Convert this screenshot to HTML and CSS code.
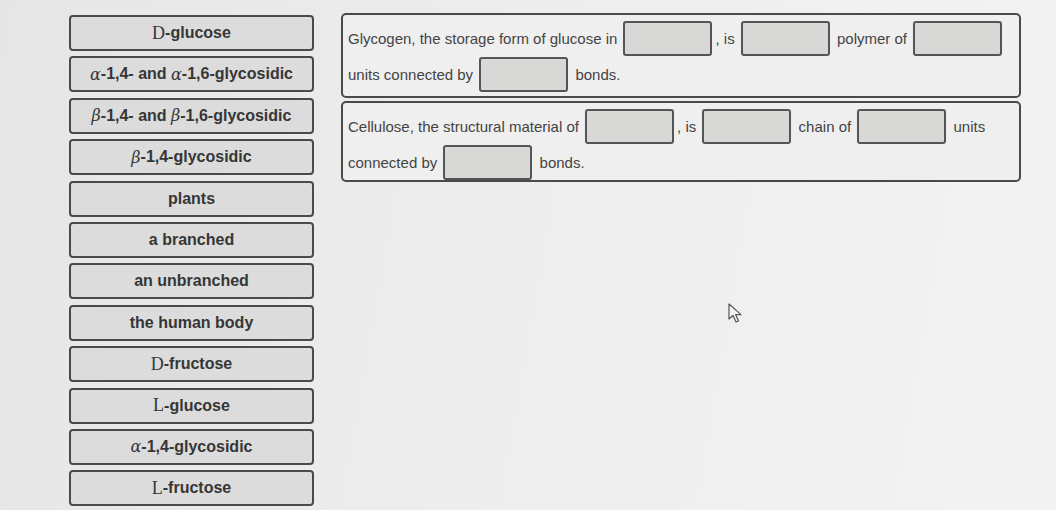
FILE: index.html
```html
<!DOCTYPE html>
<html lang="en">
<head>
<meta charset="UTF-8" />
<meta name="viewport" content="width=device-width, initial-scale=1.0"/>
<title>Glycogen and Cellulose</title>
<link rel="stylesheet" href="styles.css">
</head>
<body>
    <div class="workspace">
        <!-- Answer bank -->
        <div class="bank">
            <div class="tile"><span class="rm">D</span>-glucose</div>
            <div class="tile"><span class="gr">α</span>-1,4- and <span class="gr">α</span>-1,6-glycosidic</div>
            <div class="tile"><span class="gr">β</span>-1,4- and <span class="gr">β</span>-1,6-glycosidic</div>
            <div class="tile"><span class="gr">β</span>-1,4-glycosidic</div>
            <div class="tile">plants</div>
            <div class="tile">a branched</div>
            <div class="tile">an unbranched</div>
            <div class="tile">the human body</div>
            <div class="tile"><span class="rm">D</span>-fructose</div>
            <div class="tile"><span class="rm">L</span>-glucose</div>
            <div class="tile"><span class="gr">α</span>-1,4-glycosidic</div>
            <div class="tile"><span class="rm">L</span>-fructose</div>
        </div>

        <!-- Sentences -->
        <div class="sentences">
            <div class="panel">
                <div class="line">Glycogen, the storage form of glucose in <span class="drop"></span>, is <span class="drop"></span> polymer of <span class="drop"></span></div>
                <div class="line">units connected by <span class="drop"></span> bonds.</div>
            </div>
            <div class="panel">
                <div class="line">Cellulose, the structural material of <span class="drop"></span>, is <span class="drop"></span> chain of <span class="drop"></span> units</div>
                <div class="line">connected by <span class="drop"></span> bonds.</div>
            </div>
        </div>
    </div>

    <svg class="cursor" width="16" height="22" viewBox="0 0 16 22">
        <path d="M1 1 L1 16 L5 12.5 L8 19 L10.5 18 L7.6 11.6 L13 11.6 Z" fill="#f4f4f4" stroke="#555" stroke-width="1.2" stroke-linejoin="round"/>
    </svg>
</body>
</html>
```

FILE: styles.css
```css
html, body {
    margin: 0;
    padding: 0;
    height: 100%;
    overflow: hidden;
}

body {
    font-family: "Liberation Sans", Arial, sans-serif;
    background: linear-gradient(100deg, #e6e6e6 0%, #ededed 45%, #f3f3f3 100%);
    color: #3a3a3a;
    position: relative;
}

.workspace {
    display: flex;
    gap: 27px;
    padding: 15px 0 0 69px;
}

.bank {
    display: flex;
    flex-direction: column;
    gap: 5.4px;
    width: 245px;
}

.tile {
    height: 32px;
    display: flex;
    justify-content: center;
    align-items: center;
    background: #dcdcdc;
    border: 2px solid #4a4a4a;
    border-radius: 4px;
    font-size: 16px;
    font-weight: bold;
    color: #363636;
    white-space: pre;
}

.rm {
    font-family: "Liberation Serif", "Times New Roman", serif;
    font-weight: normal;
    font-size: 18px;
}

.gr {
    font-family: "DejaVu Serif", "Liberation Serif", serif;
    font-style: italic;
    font-weight: normal;
    font-size: 16px;
}

.sentences {
    display: flex;
    flex-direction: column;
    gap: 3px;
    margin-top: -2px;
    width: 680px;
}

.panel {
    border: 2px solid #4a4a4a;
    border-radius: 5px;
    background: #efefef;
    padding: 5px 0 4px 5px;
}

.panel + .panel {
    padding-bottom: 0;
}

.line {
    height: 36px;
    display: flex;
    align-items: center;
    font-size: 15px;
    color: #444;
    white-space: pre;
}

.drop {
    display: inline-block;
    width: 85px;
    height: 31px;
    margin: 0 3px 0 2px;
    background: #d8d8d6;
    border: 2px solid #555;
    border-radius: 3px;
}

.cursor {
    position: absolute;
    left: 728px;
    top: 303px;
}
```
